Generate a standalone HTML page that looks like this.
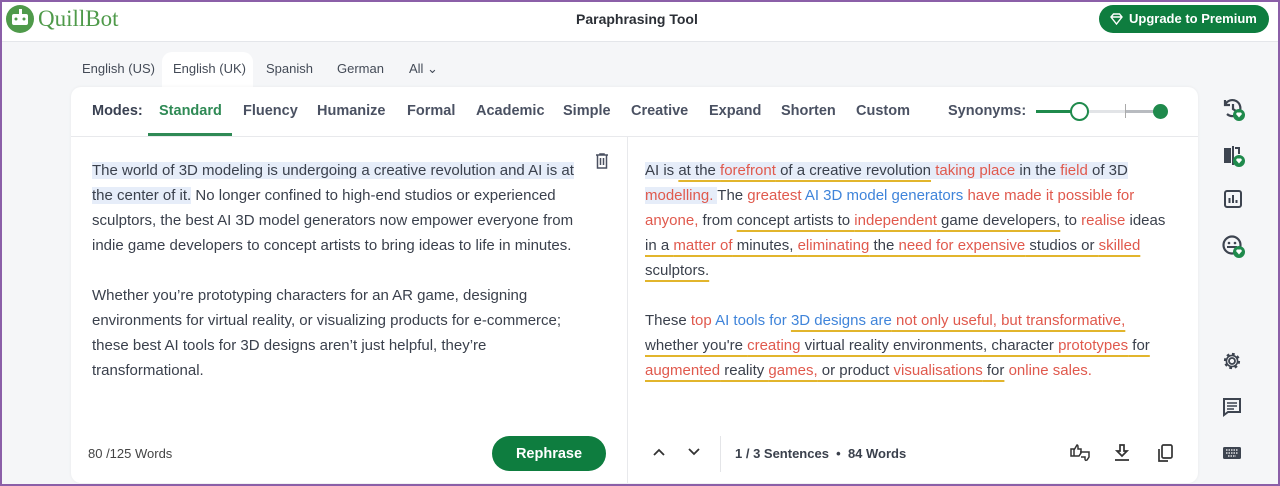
<!DOCTYPE html>
<html><head><meta charset="utf-8"><style>
*{margin:0;padding:0;box-sizing:border-box}
body{width:1280px;height:486px;overflow:hidden;background:#f5f6f8;font-family:"Liberation Sans",sans-serif;position:relative;color:#333a45}
.frame{position:absolute;inset:0;border:2px solid #8b5fa8;pointer-events:none;z-index:10}
.a{position:absolute;white-space:nowrap}
.hdr{position:absolute;left:0;top:0;width:1280px;height:42px;background:#fff;border-bottom:1px solid #e4e6ea}
.tab{position:absolute;top:61px;font-size:13px;color:#444b57}
.card{position:absolute;left:71px;top:87px;width:1127px;height:396px;background:#fff;border-radius:10px;box-shadow:0 0 3px rgba(0,0,0,.06)}
.mode{position:absolute;top:103px;font-size:14.5px;font-weight:bold;color:#4a5162}
.txt{position:absolute;font-size:15px;line-height:25px;color:#3a404c;white-space:nowrap}
.hl{background:#e6edf9}
.r{color:#e0594d}.b{color:#3f84da}
.u{text-decoration:underline;text-decoration-color:#e2b52c;text-decoration-thickness:2px;text-underline-offset:5px}
.ic{position:absolute;left:1221px}
</style></head><body>
<div class="hdr"></div>
<svg class="a" style="left:5px;top:4px" width="30" height="30" viewBox="0 0 30 30"><circle cx="15" cy="15" r="14" fill="#4f9a4a"/><rect x="7" y="10" width="16" height="11" rx="2" fill="#fff"/><circle cx="11" cy="15" r="1.5" fill="#4f9a4a"/><circle cx="19" cy="15" r="1.5" fill="#4f9a4a"/><rect x="14" y="5" width="3" height="5" fill="#fff"/></svg>
<div class="a" style="left:38px;top:6px;font-family:'Liberation Serif',serif;font-size:23px;color:#4f9a4a">QuillBot</div>
<div class="a" style="left:576px;top:11px;font-size:14px;font-weight:bold;color:#2b2f36">Paraphrasing Tool</div>
<div class="a" style="left:1099px;top:5px;width:170px;height:28px;border-radius:14px;background:#0e7d3f;color:#fff;font-size:13px;font-weight:bold;line-height:28px;padding-left:30px">Upgrade to Premium</div>
<svg class="a" style="left:1110px;top:13px" width="13" height="12" viewBox="0 0 13 12"><path d="M1 4 L3.5 1 H9.5 L12 4 L6.5 11 Z M1 4 H12" fill="none" stroke="#fff" stroke-width="1.4"/></svg>

<div class="a" style="left:162px;top:52px;width:91px;height:40px;background:#fff;border-radius:10px 10px 0 0"></div>
<div class="tab" style="left:82px">English (US)</div>
<div class="tab" style="left:173px">English (UK)</div>
<div class="tab" style="left:266px">Spanish</div>
<div class="tab" style="left:337px">German</div>
<div class="tab" style="left:409px">All ⌄</div>

<div class="card"></div>
<div class="a" style="left:71px;top:136px;width:1127px;height:1px;background:#e8e9ec"></div>
<div class="a" style="left:627px;top:137px;width:1px;height:346px;background:#e8e9ec"></div>
<div class="mode" style="left:92px;color:#3a4152">Modes:</div>
<div class="mode" style="left:159px;color:#2f8a55">Standard</div>
<div class="a" style="left:148px;top:133px;width:84px;height:3px;background:#2f8a55"></div>
<div class="mode" style="left:243px">Fluency</div>
<div class="mode" style="left:317px">Humanize</div>
<div class="mode" style="left:407px">Formal</div>
<div class="mode" style="left:476px">Academic</div>
<div class="mode" style="left:563px">Simple</div>
<div class="mode" style="left:631px">Creative</div>
<div class="mode" style="left:709px">Expand</div>
<div class="mode" style="left:781px">Shorten</div>
<div class="mode" style="left:856px">Custom</div>
<div class="mode" style="left:948px">Synonyms:</div>
<div class="a" style="left:1036px;top:110px;width:44px;height:3px;background:#1f8a4c"></div>
<div class="a" style="left:1080px;top:110px;width:78px;height:3px;background:#e2e4e7"></div>
<div class="a" style="left:1125px;top:104px;width:1px;height:14px;background:#aaa"></div>
<div class="a" style="left:1126px;top:110px;width:30px;height:3px;background:#b8bbc0"></div>
<div class="a" style="left:1070px;top:102px;width:19px;height:19px;border-radius:50%;border:2px solid #1f8a4c;background:#fff"></div>
<div class="a" style="left:1153px;top:104px;width:15px;height:15px;border-radius:50%;background:#1f8a4c"></div>

<svg class="a" style="left:595px;top:153px" width="14" height="16" viewBox="0 0 14 16"><path d="M1 2H13M5 2V1H9V2M2.5 2V15H11.5V2M5.5 5V12M8.5 5V12" fill="none" stroke="#4a5060" stroke-width="1.5"/></svg>

<div class="txt" style="left:92px;top:158px"><span class="hl">The world of 3D modeling is undergoing a creative revolution and AI is at</span><br><span class="hl">the center of it.</span> No longer confined to high-end studios or experienced<br>sculptors, the best AI 3D model generators now empower everyone from<br>indie game developers to concept artists to bring ideas to life in minutes.<br><br>Whether you’re prototyping characters for an AR game, designing<br>environments for virtual reality, or visualizing products for e-commerce;<br>these best AI tools for 3D designs aren’t just helpful, they’re<br>transformational.</div>

<div class="txt" style="left:645px;top:158px"><span class="hl">AI is <span class="u">at the <span class="r">forefront</span> of a creative revolution</span> <span class="r">taking place</span> in the <span class="r">field</span> of 3D</span><br><span class="hl r">modelling. </span>The <span class="r">greatest</span> <span class="b">AI 3D model generators</span> <span class="r">have made it possible for</span><br><span class="r">anyone,</span> from <span class="u">concept artists to <span class="r">independent</span> game developers,</span> to <span class="r">realise</span> ideas<br><span class="u">in a <span class="r">matter of</span> minutes, <span class="r">eliminating</span> the <span class="r">need for expensive</span> studios or <span class="r">skilled</span></span><br><span class="u">sculptors.</span><br><br>These <span class="r">top</span> <span class="b">AI tools for</span> <span class="u"><span class="b">3D designs are</span> <span class="r">not only useful, but transformative,</span></span><br><span class="u">whether you're <span class="r">creating</span> virtual reality environments, character <span class="r">prototypes</span> for</span><br><span class="u"><span class="r">augmented</span> reality <span class="r">games,</span> or product <span class="r">visualisations</span> for</span> <span class="r">online sales.</span></div>

<div class="a" style="left:88px;top:446px;font-size:13px;color:#444">80 /125 Words</div>
<div class="a" style="left:492px;top:436px;width:114px;height:35px;border-radius:18px;background:#0e7d3f;color:#fff;font-size:14.5px;font-weight:bold;display:flex;align-items:center;justify-content:center">Rephrase</div>

<svg class="a" style="left:688px;top:448px" width="12" height="8" viewBox="0 0 12 8"><path d="M1 1L6 6L11 1" fill="none" stroke="#333" stroke-width="1.8"/></svg>
<svg class="a" style="left:653px;top:448px" width="12" height="8" viewBox="0 0 12 8"><path d="M1 7L6 2L11 7" fill="none" stroke="#333" stroke-width="1.8"/></svg>
<div class="a" style="left:720px;top:436px;width:1px;height:36px;background:#e4e5e8"></div>
<div class="a" style="left:735px;top:446px;font-size:13px;font-weight:bold;color:#3a404c">1 / 3 Sentences &nbsp;• &nbsp;84 Words</div>
<svg class="a" style="left:1069px;top:443px" width="22" height="20" viewBox="0 0 22 20"><path d="M2 6H5V13H2ZM5 7L8 2Q9 2 9 4V6H12V10L10 13H5M11 9H20V14L18 17Q16 18 16 16V14H12" fill="none" stroke="#333" stroke-width="1.5"/></svg>
<svg class="a" style="left:1113px;top:443px" width="18" height="20" viewBox="0 0 18 20"><path d="M7 2H11V8H14L9 13L4 8H7Z M2 17H16" fill="none" stroke="#333" stroke-width="1.7"/></svg>
<svg class="a" style="left:1156px;top:443px" width="18" height="20" viewBox="0 0 18 20"><rect x="6" y="2" width="10" height="13" rx="1.5" fill="none" stroke="#333" stroke-width="1.7"/><path d="M3 6V18H12" fill="none" stroke="#333" stroke-width="1.7"/></svg>

<svg class="ic" style="top:97px" width="26" height="26" viewBox="0 0 26 26"><path d="M4 8A8 8 0 1 1 6 17M4 3V8H9M12 7V12L15 14" fill="none" stroke="#3d4450" stroke-width="2.2"/><circle cx="18" cy="18" r="6" fill="#1f8a4c"/><path d="M15 17L16 15.5H20L21 17L18 20.5Z" fill="#fff"/></svg>
<svg class="ic" style="top:143px" width="26" height="26" viewBox="0 0 26 26"><path d="M3 5H10V20H3Z" fill="#3d4450"/><path d="M12 3V22M14 5H18V11" fill="none" stroke="#3d4450" stroke-width="2"/><circle cx="18" cy="18" r="6" fill="#1f8a4c"/><path d="M15 17L16 15.5H20L21 17L18 20.5Z" fill="#fff"/></svg>
<svg class="ic" style="top:189px;left:1223px" width="20" height="20" viewBox="0 0 20 20"><rect x="2" y="2" width="16" height="16" rx="2" fill="none" stroke="#3d4450" stroke-width="2"/><path d="M6.5 14V9M10 14V6M13.5 14V11" stroke="#3d4450" stroke-width="2"/></svg>
<svg class="ic" style="top:234px" width="26" height="26" viewBox="0 0 26 26"><circle cx="11" cy="11" r="8.5" fill="none" stroke="#3d4450" stroke-width="2.2"/><circle cx="8" cy="9" r="1.3" fill="#3d4450"/><circle cx="14" cy="9" r="1.3" fill="#3d4450"/><path d="M6 13H16" stroke="#3d4450" stroke-width="2"/><circle cx="18" cy="18" r="6" fill="#1f8a4c"/><path d="M15 17L16 15.5H20L21 17L18 20.5Z" fill="#fff"/></svg>
<svg class="ic" style="top:351px;left:1222px" width="20" height="20" viewBox="0 0 20 20"><circle cx="10" cy="10" r="3" fill="none" stroke="#3d4450" stroke-width="1.8"/><circle cx="10" cy="10" r="6.8" fill="none" stroke="#3d4450" stroke-width="2.6" stroke-dasharray="2.7 2.6"/><circle cx="10" cy="10" r="5.6" fill="none" stroke="#3d4450" stroke-width="1.6"/></svg>
<svg class="ic" style="top:397px;left:1222px" width="20" height="20" viewBox="0 0 20 20"><path d="M2 2H18V15H6L2 18Z" fill="none" stroke="#3d4450" stroke-width="2"/><path d="M5 6H15M5 9H15M5 12H12" stroke="#3d4450" stroke-width="1.6"/></svg>
<svg class="ic" style="top:445px;left:1222px" width="20" height="16" viewBox="0 0 20 16"><rect x="1" y="2" width="18" height="12" rx="1.5" fill="#3d4450"/><path d="M4 5H16M4 8H16M6 11H14" stroke="#fff" stroke-width="1.2" stroke-dasharray="1.5 1"/></svg>
<div class="frame"></div>
</body></html>
